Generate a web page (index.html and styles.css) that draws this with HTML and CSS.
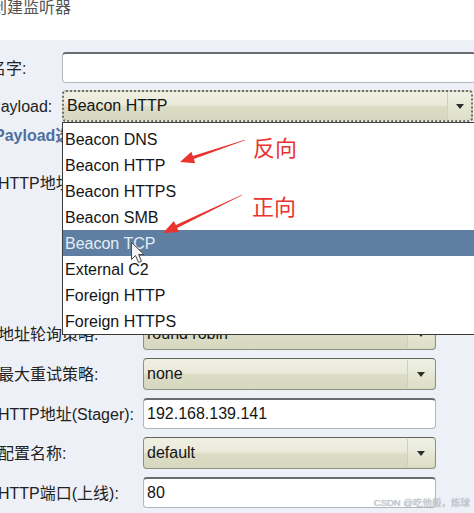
FILE: index.html
```html
<!DOCTYPE html>
<html lang="zh">
<head>
<meta charset="utf-8">
<title>创建监听器</title>
<link rel="stylesheet" href="styles.css">
</head>
<body>
<div class="window">
  <div class="titlebar"><span class="title">创建监听器</span></div>
  <div class="form">
    <div class="top-grid">
      <label class="lbl">名字:</label>
      <div class="input"></div>
      <label class="lbl">Payload:</label>
      <div class="select focused"><span class="val">Beacon HTTP</span><span class="btn"><i class="tri"></i></span></div>
    </div>
    <div class="options">
      <div class="section-title">Payload选项</div>
      <div class="opt-grid">
        <label class="lbl lbl-top">HTTP地址</label>
        <div class="hosts"></div>
        <label class="lbl">地址轮询策略:</label>
        <div class="select"><span class="val">round robin</span><span class="btn"><i class="tri"></i></span></div>
        <label class="lbl">最大重试策略:</label>
        <div class="select"><span class="val">none</span><span class="btn"><i class="tri"></i></span></div>
        <label class="lbl">HTTP地址(Stager):</label>
        <div class="input">192.168.139.141</div>
        <label class="lbl">配置名称:</label>
        <div class="select"><span class="val">default</span><span class="btn"><i class="tri"></i></span></div>
        <label class="lbl">HTTP端口(上线):</label>
        <div class="input">80</div>
      </div>
    </div>
  </div>

  <ul class="dropdown">
    <li class="item">Beacon DNS</li>
    <li class="item">Beacon HTTP</li>
    <li class="item">Beacon HTTPS</li>
    <li class="item">Beacon SMB</li>
    <li class="item active">Beacon TCP</li>
    <li class="item">External C2</li>
    <li class="item">Foreign HTTP</li>
    <li class="item">Foreign HTTPS</li>
  </ul>

  <svg class="annot" width="474" height="513" viewBox="0 0 474 513">
    <polygon class="arrow" points="244.9,139.7 192.8,156.1 191.4,151.8 180,162 195.2,163.2 193.8,158.9 245.1,140.3"/>
    <polygon class="arrow" points="241.9,194.7 175.9,225.1 173.9,221.1 163,233 179.1,231.9 177.1,227.9 242.1,195.3"/>
    <text class="note" x="253" y="156">反向</text>
    <text class="note" x="252" y="215">正向</text>
    <path class="cursor" d="M131.5,242.5 L131.5,259.5 L135.5,255.5 L138.5,262.5 L141.5,261.3 L138.6,254.5 L144,254.5 Z"/>
  </svg>

  <div class="watermark">CSDN @吃他般，炼球</div>
</div>
</body>
</html>
```

FILE: styles.css
```css
html, body {
  margin: 0;
  padding: 0;
}

body {
  width: 474px;
  height: 513px;
  overflow: hidden;
  background: #edf0f6;
  font-family: "Liberation Sans", "Noto Sans CJK SC", sans-serif;
  font-size: 16px;
  color: #1c1c1c;
}

.window {
  position: relative;
  width: 474px;
  height: 513px;
  overflow: hidden;
}

.titlebar {
  height: 40px;
  background: #ffffff;
}

.title {
  display: block;
  margin-left: -9px;
  font-size: 16px;
  line-height: 16px;
  color: #555555;
}

.form {
  margin-left: -10px;
  padding-top: 12px;
}

.top-grid {
  display: grid;
  grid-template-columns: 72px 414px;
  row-gap: 7px;
  align-items: center;
}

.lbl {
  display: block;
  line-height: 20px;
  padding-top: 2px;
  color: #222222;
  white-space: nowrap;
}

.lbl-top {
  align-self: start;
  padding-top: 4px;
  width: 64px;
  overflow: hidden;
}

.input {
  height: 31px;
  box-sizing: border-box;
  background: #ffffff;
  border: 1px solid #b3b6bd;
  border-top: 2px solid #6a6c72;
  border-radius: 4px;
  padding-left: 3px;
  display: flex;
  align-items: center;
  color: #151515;
}

.select {
  height: 32px;
  box-sizing: border-box;
  border: 1px solid #8e9082;
  border-top-color: #62645a;
  border-radius: 4px;
  background: linear-gradient(#eff0e3 0%, #e9eada 45%, #dadcc5 55%, #d6d8bf 100%);
  display: flex;
  align-items: center;
  padding-left: 3px;
  color: #151515;
}

.select.focused {
  width: 411px;
  border: 2px dotted #6f7068;
  padding-left: 3px;
}

.select .val {
  flex: 1;
  white-space: nowrap;
}

.select .btn {
  width: 26px;
  align-self: stretch;
  margin: 1px 1px 1px 0;
  border-left: 1px solid #cfd1bd;
  border-radius: 0 3px 3px 0;
  background: linear-gradient(#f0f1e6 0%, #e6e8d5 50%, #dcdec8 100%);
  display: flex;
  align-items: center;
  justify-content: center;
}

.select.focused .btn {
  width: 23px;
  margin: 0;
}

.tri {
  display: block;
  width: 0;
  height: 0;
  border-left: 4px solid transparent;
  border-right: 4px solid transparent;
  border-top: 5px solid #2e2e2e;
}

.options {
  margin-left: 8px;
  padding-top: 4px;
}

.section-title {
  margin-left: -4px;
  width: 68px;
  overflow: hidden;
  white-space: nowrap;
  font-weight: bold;
  color: #4f6f9f;
  line-height: 20px;
}

.opt-grid {
  display: grid;
  grid-template-columns: 145px 293px;
  row-gap: 8px;
  align-items: center;
  margin-top: 24px;
}

.hosts {
  height: 140px;
  box-sizing: border-box;
  background: #ffffff;
  border: 1px solid #a9abb2;
}

.dropdown {
  position: absolute;
  left: 62px;
  top: 122px;
  width: 420px;
  box-sizing: border-box;
  margin: 0;
  padding: 3px 0 0 0;
  list-style: none;
  background: #ffffff;
  border: 1px solid #3a3a3a;
  border-right: none;
}

.item {
  height: 26px;
  line-height: 27px;
  padding-left: 2px;
  color: #151515;
  white-space: nowrap;
}

.item.active {
  background: #5f7fa2;
  color: #e6edf5;
}

.annot {
  position: absolute;
  left: 0;
  top: 0;
  pointer-events: none;
}

.arrow {
  fill: #e8332f;
}

.note {
  fill: #e8332f;
  font-family: "Noto Sans CJK SC", sans-serif;
  font-size: 22px;
}

.cursor {
  fill: #f4f4f4;
  stroke: #4a4a4a;
  stroke-width: 1;
  stroke-linejoin: round;
}

.watermark {
  position: absolute;
  right: 4px;
  top: 497px;
  font-size: 9.5px;
  line-height: 12px;
  color: #c9cdd6;
  text-shadow: 0 0 1px #9aa0aa;
  white-space: nowrap;
}
```
